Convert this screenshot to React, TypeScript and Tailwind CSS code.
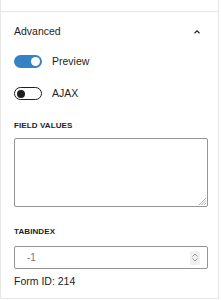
import React from "react";

function Toggle({ on }: { on: boolean }) {
  return on ? (
    <div className="w-[28px] h-[13px] rounded-full bg-[#3582c4] flex items-center justify-end px-[2px] shrink-0">
      <div className="w-[9px] h-[9px] rounded-full bg-white" />
    </div>
  ) : (
    <div className="w-[28px] h-[13px] rounded-full border border-[#1e1e1e] bg-white flex items-center justify-start px-[2px] shrink-0">
      <div className="w-[8px] h-[8px] rounded-full bg-[#1e1e1e]" />
    </div>
  );
}

export default function App() {
  return (
    <div className="w-[221px] h-[300px] bg-white" style={{ fontFamily: '"Liberation Sans", Arial, sans-serif' }}>
      <div className="w-[219px] h-[299px] border-r border-b border-l border-[#e6e6e6] flex flex-col">
        <div className="h-[11px]" />
        <div className="border-t border-[#e6e6e6] flex flex-col px-[13px]">
          {/* Header */}
          <div className="h-[39px] flex items-center justify-between pt-[1px]">
            <span className="text-[10.5px] font-medium text-[#1e1e1e]">Advanced</span>
            <svg width="10" height="10" viewBox="0 0 24 24" className="mr-[3px]">
              <path d="M6 15l6-6 6 6" fill="none" stroke="#1e1e1e" strokeWidth="2.6" />
            </svg>
          </div>

          {/* Toggles */}
          <div className="flex items-center gap-[10px] h-[13px] mt-[4px]">
            <Toggle on />
            <span className="text-[10.5px] text-[#1e1e1e]">Preview</span>
          </div>
          <div className="flex items-center gap-[10px] h-[13px] mt-[19px]">
            <Toggle on={false} />
            <span className="text-[10.5px] text-[#1e1e1e]">AJAX</span>
          </div>

          {/* Field values */}
          <div className="mt-[21px] text-[8px] font-bold text-[#1e1e1e] uppercase leading-[10px] tracking-[0.1px]">
            Field values
          </div>
          <div className="mt-[7px] h-[69px] w-[194px] rounded-[2px] border border-[#949494] bg-white relative">
            <svg width="7" height="7" viewBox="0 0 7 7" className="absolute right-[1px] bottom-[1px]">
              <path d="M7 0L0 7M7 2.5L2.5 7M7 5L5 7" stroke="#999" strokeWidth="0.8" />
            </svg>
          </div>

          {/* Tabindex */}
          <div className="mt-[20px] text-[8px] font-bold text-[#1e1e1e] uppercase leading-[10px] tracking-[0.1px]">
            Tabindex
          </div>
          <div className="mt-[9px] h-[23px] w-[194px] rounded-[2px] border border-[#949494] bg-white flex items-center justify-between pl-[12px] pr-[7px]">
            <span className="text-[10px] text-[#757575]">-1</span>
            <div className="w-[10px] h-[14px] rounded-[2px] bg-[#f0f0f0] flex flex-col items-center justify-center gap-[1px]">
              <svg width="6" height="4" viewBox="0 0 6 4">
                <path d="M0.5 3.5L3 1L5.5 3.5" fill="none" stroke="#8c8c8c" strokeWidth="0.9" />
              </svg>
              <svg width="6" height="4" viewBox="0 0 6 4">
                <path d="M0.5 0.5L3 3L5.5 0.5" fill="none" stroke="#8c8c8c" strokeWidth="0.9" />
              </svg>
            </div>
          </div>

          <div className="mt-[6px] text-[10.5px] text-[#1e1e1e] leading-[13px]">Form ID: 214</div>
        </div>
      </div>
    </div>
  );
}
